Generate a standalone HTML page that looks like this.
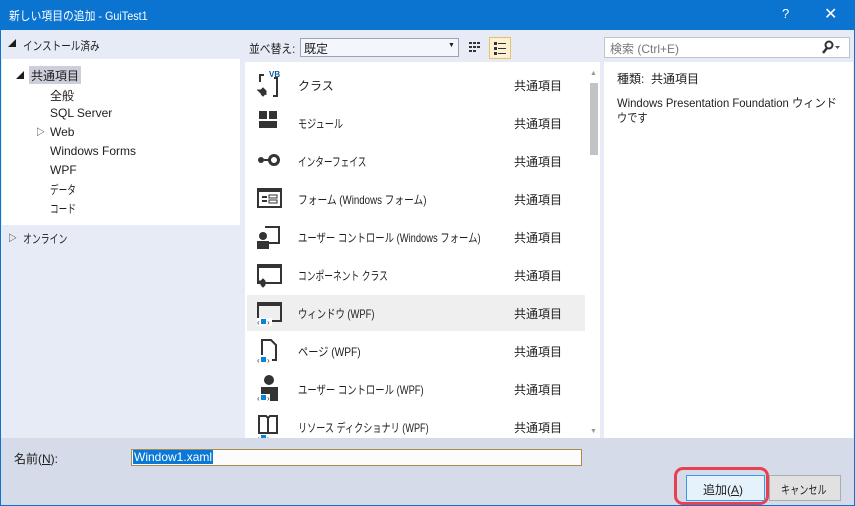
<!DOCTYPE html>
<html><head><meta charset="utf-8"><style>
*{margin:0;padding:0;box-sizing:border-box}
body{width:855px;height:506px;overflow:hidden;background:#0a74d0;font-family:"Liberation Sans","Noto Sans CJK JP",sans-serif;font-size:12px;color:#1e1e1e;position:relative}
.a{position:absolute}
.t{white-space:nowrap}
.s{display:inline-block;transform-origin:0 50%;white-space:nowrap}
.win{left:1px;top:30px;width:853px;height:475px;background:#e6ebf5}
.bot{left:1px;top:438px;width:853px;height:67px;background:#d6dbe9}
.row{position:absolute;left:247px;width:338px;height:38px}
.row .n{position:absolute;left:51px;top:11px;transform-origin:0 50%;white-space:nowrap}
.row .c{position:absolute;left:267px;top:11px}
.row svg{position:absolute;left:7px;top:4px}
</style></head><body>
<div class="a t" style="left:9px;top:7px;color:#fff;font-size:12px"><span class="s" style="transform:scaleX(.9)">新しい項目の追加 - GuiTest1</span></div>
<div class="a t" style="left:782px;top:6px;color:#fff;font-size:13px">?</div>
<div class="a t" style="left:824px;top:4px;color:#fff;font-size:16px">✕</div>
<div class="a win"></div>
<div class="a bot"></div>
<!-- left -->
<div class="a t" style="left:8px;top:38px;font-size:8px">◢</div>
<div class="a t" style="left:23px;top:37px"><span class="s" style="transform:scaleX(.8)">インストール済み</span></div>
<div class="a" style="left:2px;top:59px;width:238px;height:166px;background:#fff"></div>
<div class="a t" style="left:16px;top:70px;font-size:8px">◢</div>
<div class="a" style="left:29px;top:66px;width:52px;height:18px;background:#cccedb"></div>
<div class="a t" style="left:31px;top:67px">共通項目</div>
<div class="a t" style="left:50px;top:87px">全般</div>
<div class="a t" style="left:50px;top:106px">SQL Server</div>
<div class="a t" style="left:36px;top:125px;font-size:9px">▷</div>
<div class="a t" style="left:50px;top:125px">Web</div>
<div class="a t" style="left:50px;top:144px">Windows Forms</div>
<div class="a t" style="left:50px;top:163px">WPF</div>
<div class="a t" style="left:50px;top:181px"><span class="s" style="transform:scaleX(.72)">データ</span></div>
<div class="a t" style="left:50px;top:200px"><span class="s" style="transform:scaleX(.72)">コード</span></div>
<div class="a t" style="left:8px;top:231px;font-size:9px">▷</div>
<div class="a t" style="left:23px;top:230px"><span class="s" style="transform:scaleX(.74)">オンライン</span></div>
<!-- toolbar -->
<div class="a t" style="left:249px;top:40px"><span class="s" style="transform:scaleX(.9)">並べ替え:</span></div>
<div class="a" style="left:300px;top:38px;width:159px;height:19px;background:#f3f6fc;border:1px solid #a0a4b0"></div>
<div class="a t" style="left:304px;top:40px">既定</div>
<div class="a t" style="left:448px;top:42px;font-size:7px">▼</div>
<svg class="a" style="left:467px;top:40px" width="16" height="16"><g fill="#333"><rect x="2" y="2" width="3" height="2"/><rect x="6" y="2" width="3" height="2"/><rect x="10" y="2" width="3" height="2"/><rect x="2" y="6" width="3" height="2"/><rect x="6" y="6" width="3" height="2"/><rect x="10" y="6" width="3" height="2"/><rect x="2" y="10" width="3" height="2"/><rect x="6" y="10" width="3" height="2"/></g></svg>
<div class="a" style="left:489px;top:37px;width:22px;height:22px;background:#fdf0d5;border:1px solid #e5c365"></div>
<svg class="a" style="left:492px;top:40px" width="16" height="16"><g fill="#333"><rect x="2" y="2" width="3" height="3"/><rect x="6" y="3" width="8" height="1"/><rect x="2" y="7" width="3" height="3"/><rect x="6" y="8" width="8" height="1"/><rect x="2" y="12" width="3" height="3"/><rect x="6" y="13" width="8" height="1"/></g></svg>
<div class="a" style="left:604px;top:37px;width:246px;height:21px;background:#fff;border:1px solid #c0c4cc"></div>
<div class="a t" style="left:610px;top:40px;color:#777">検索 (Ctrl+E)</div>
<svg class="a" style="left:820px;top:40px" width="28" height="14"><circle cx="9" cy="5" r="3.5" fill="none" stroke="#333" stroke-width="2"/><line x1="7" y1="8" x2="3" y2="13" stroke="#333" stroke-width="2.5"/><path d="M15 6h5l-2.5 3z" fill="#555"/></svg>
<!-- list -->
<div class="a" style="left:245px;top:62px;width:355px;height:376px;background:#fff"></div>
<div class="a" style="left:587px;top:62px;width:13px;height:376px;background:#fff"></div>
<div class="a t" style="left:590px;top:70px;font-size:7px;color:#999">▲</div>
<div class="a" style="left:590px;top:83px;width:8px;height:72px;background:#c2c3c9"></div>
<div class="a t" style="left:590px;top:428px;font-size:7px;color:#999">▼</div>
<div class="row" style="top:295px;height:36px;background:#efefef"></div>
<div class="row" style="top:66px"><svg width="30" height="30"><path d="M6 12V5h4M20 8h3v18h-4" fill="none" stroke="#333" stroke-width="2"/><text x="15" y="7" font-size="8" font-weight="bold" fill="#0e5ba6" font-family="Liberation Sans">VB</text><path d="M3 20h4l2-2 2 2v4l-2 2-2-2M9 18l3 3v4" fill="#333" stroke="#333"/></svg><span class="n">クラス</span><span class="c">共通項目</span></div>
<div class="row" style="top:104px"><svg width="30" height="30"><g fill="#333"><rect x="5" y="3" width="8" height="8"/><rect x="15" y="3" width="8" height="8"/><rect x="5" y="13" width="18" height="7"/></g></svg><span class="n" style="transform:scaleX(.76)">モジュール</span><span class="c">共通項目</span></div>
<div class="row" style="top:142px"><svg width="30" height="30"><circle cx="7" cy="14" r="3" fill="#333"/><rect x="7" y="13" width="8" height="2" fill="#333"/><circle cx="20" cy="14" r="4.5" fill="none" stroke="#333" stroke-width="3"/></svg><span class="n" style="transform:scaleX(.72)">インターフェイス</span><span class="c">共通項目</span></div>
<div class="row" style="top:180px"><svg width="30" height="30"><rect x="4" y="5" width="23" height="18" fill="none" stroke="#333" stroke-width="2"/><rect x="4" y="5" width="23" height="3" fill="#333"/><g fill="#333"><rect x="8" y="12" width="5" height="2"/><rect x="8" y="16" width="5" height="2"/></g><rect x="15" y="11" width="8" height="3" fill="none" stroke="#333"/><rect x="15" y="16" width="8" height="3" fill="none" stroke="#333"/></svg><span class="n" style="transform:scaleX(.81)">フォーム (Windows フォーム)</span><span class="c">共通項目</span></div>
<div class="row" style="top:218px"><svg width="30" height="30"><path d="M11 5h14v16h-10" fill="none" stroke="#333" stroke-width="2"/><circle cx="9" cy="14" r="4" fill="#333"/><rect x="3" y="19" width="12" height="8" fill="#333"/></svg><span class="n" style="transform:scaleX(.78)">ユーザー コントロール (Windows フォーム)</span><span class="c">共通項目</span></div>
<div class="row" style="top:256px"><svg width="30" height="30"><rect x="4" y="5" width="23" height="18" fill="none" stroke="#333" stroke-width="2"/><rect x="4" y="5" width="23" height="3" fill="#333"/><path d="M3 21h4l2-2 2 2v4l-2 2-2-2" fill="#333" stroke="#333"/></svg><span class="n" style="transform:scaleX(.73)">コンポーネント クラス</span><span class="c">共通項目</span></div>
<div class="row" style="top:294px"><svg width="30" height="30"><rect x="4" y="5" width="23" height="18" fill="none" stroke="#333" stroke-width="2"/><rect x="4" y="5" width="23" height="3" fill="#333"/><rect x="3" y="20" width="15" height="8" fill="#fff"/><text x="3" y="27" font-size="8" fill="#333">‹</text><rect x="7" y="21" width="5" height="5" fill="#0a84d8"/><text x="13" y="27" font-size="8" fill="#333">›</text></svg><span class="n" style="transform:scaleX(.78)">ウィンドウ (WPF)</span><span class="c">共通項目</span></div>
<div class="row" style="top:332px"><svg width="30" height="30"><path d="M8 19V4h9l5 5v15h-4" fill="none" stroke="#333" stroke-width="2"/><text x="3" y="27" font-size="8" fill="#333">‹</text><rect x="7" y="21" width="5" height="5" fill="#0a84d8"/><text x="13" y="27" font-size="8" fill="#333">›</text></svg><span class="n" style="transform:scaleX(.85)">ページ (WPF)</span><span class="c">共通項目</span></div>
<div class="row" style="top:370px"><svg width="30" height="30"><circle cx="15" cy="6" r="5" fill="#333"/><rect x="7" y="13" width="17" height="14" fill="#333"/><rect x="2" y="20" width="14" height="8" fill="#fff"/><text x="3" y="27" font-size="8" fill="#333">‹</text><rect x="7" y="21" width="5" height="5" fill="#0a84d8"/><text x="13" y="27" font-size="8" fill="#333">›</text></svg><span class="n" style="transform:scaleX(.78)">ユーザー コントロール (WPF)</span><span class="c">共通項目</span></div>
<div class="row" style="top:408px;height:30px;overflow:hidden"><svg width="30" height="30"><path d="M5 4h7l2 2 2-2h7v17H5z" fill="none" stroke="#333" stroke-width="2"/><line x1="14" y1="6" x2="14" y2="21" stroke="#333" stroke-width="2"/><text x="3" y="29" font-size="8" fill="#333">‹</text><rect x="7" y="23" width="5" height="5" fill="#0a84d8"/><text x="13" y="29" font-size="8" fill="#333">›</text></svg><span class="n" style="transform:scaleX(.76)">リソース ディクショナリ (WPF)</span><span class="c">共通項目</span></div>
<!-- right -->
<div class="a" style="left:604px;top:62px;width:249px;height:376px;background:#fff"></div>
<div class="a t" style="left:617px;top:70px">種類:&nbsp; 共通項目</div>
<div class="a t" style="left:617px;top:94px"><span class="s" style="transform:scaleX(.94)">Windows Presentation Foundation ウィンド</span></div>
<div class="a t" style="left:617px;top:109px"><span class="s" style="transform:scaleX(.85)">ウです</span></div>
<!-- bottom -->
<div class="a t" style="left:14px;top:450px">名前(<u>N</u>):</div>
<div class="a" style="left:131px;top:449px;width:451px;height:17px;background:#fcfcfc;border:1px solid #a88c4e"></div>
<div class="a t" style="left:133px;top:450px;height:14px;line-height:14px;background:#0a78d7;color:#fff;padding:0 1px">Window1.xaml</div>
<div class="a" style="left:674px;top:467px;width:95px;height:38px;border:3px solid #e8404f;border-radius:9px"></div>
<div class="a" style="left:686px;top:475px;width:79px;height:26px;background:#e5f1fb;border:1px solid #3c9ae8"></div>
<div class="a t" style="left:703px;top:481px">追加(<u>A</u>)</div>
<div class="a" style="left:769px;top:475px;width:72px;height:26px;background:#e1e1e1;border:1px solid #adadad"></div>
<div class="a t" style="left:781px;top:481px"><span class="s" style="transform:scaleX(.76)">キャンセル</span></div>
</body></html>
